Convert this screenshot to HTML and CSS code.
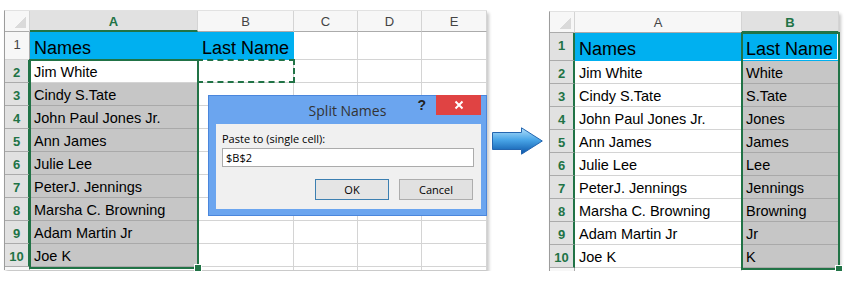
FILE: index.html
```html
<!DOCTYPE html>
<html lang="en">

<head>
  <meta charset="UTF-8">
  <title>Split Names</title>
  <link rel="stylesheet" href="styles.css">
</head>

<body>
  <div class="scene">
    <!-- Before: sheet with dialog -->
    <div class="sheet sheet-left">
      <div class="c hd corner"></div>
      <div class="c hd on">A</div>
      <div class="c hd">B</div>
      <div class="c hd">C</div>
      <div class="c hd">D</div>
      <div class="c hd">E</div>

      <div class="c rh">1</div>
      <div class="c cyan">Names</div>
      <div class="c cyan">Last Name</div>
      <div class="c"></div>
      <div class="c"></div>
      <div class="c"></div>

      <div class="c rh on">2</div>
      <div class="c">Jim White</div>
      <div class="c"></div>
      <div class="c"></div>
      <div class="c"></div>
      <div class="c"></div>

      <div class="c rh on">3</div>
      <div class="c gray">Cindy S.Tate</div>
      <div class="c"></div>
      <div class="c"></div>
      <div class="c"></div>
      <div class="c"></div>

      <div class="c rh on">4</div>
      <div class="c gray">John Paul Jones Jr.</div>
      <div class="c"></div>
      <div class="c"></div>
      <div class="c"></div>
      <div class="c"></div>

      <div class="c rh on">5</div>
      <div class="c gray">Ann James</div>
      <div class="c"></div>
      <div class="c"></div>
      <div class="c"></div>
      <div class="c"></div>

      <div class="c rh on">6</div>
      <div class="c gray">Julie Lee</div>
      <div class="c"></div>
      <div class="c"></div>
      <div class="c"></div>
      <div class="c"></div>

      <div class="c rh on">7</div>
      <div class="c gray">PeterJ. Jennings</div>
      <div class="c"></div>
      <div class="c"></div>
      <div class="c"></div>
      <div class="c"></div>

      <div class="c rh on">8</div>
      <div class="c gray">Marsha C. Browning</div>
      <div class="c"></div>
      <div class="c"></div>
      <div class="c"></div>
      <div class="c"></div>

      <div class="c rh on">9</div>
      <div class="c gray">Adam Martin Jr</div>
      <div class="c"></div>
      <div class="c"></div>
      <div class="c"></div>
      <div class="c"></div>

      <div class="c rh on">10</div>
      <div class="c gray">Joe K</div>
      <div class="c"></div>
      <div class="c"></div>
      <div class="c"></div>
      <div class="c"></div>

      <div class="c rh tail"></div>
      <div class="c tail"></div>
      <div class="c tail"></div>
      <div class="c tail"></div>
      <div class="c tail"></div>
      <div class="c tail"></div>

      <div class="range range-a"><span class="handle"></span></div>
      <div class="ants"></div>

      <div class="dialog">
        <div class="titlebar">
          <span class="title">Split Names</span>
          <div class="controls">
            <span class="help">?</span>
            <span class="close">
              <svg width="10" height="10" viewBox="0 0 10 10">
                <path d="M1.5 1.5 L8.5 8.5 M8.5 1.5 L1.5 8.5" stroke="#fff" stroke-width="2" />
              </svg>
            </span>
          </div>
        </div>
        <div class="panel">
          <div class="label">Paste to (single cell):</div>
          <div class="input">$B$2</div>
          <div class="buttons">
            <div class="btn default">OK</div>
            <div class="btn">Cancel</div>
          </div>
        </div>
      </div>
    </div>

    <!-- Arrow -->
    <svg class="arrow" width="51" height="28" viewBox="0 0 51 28">
      <defs>
        <linearGradient id="arrowFill" x1="0" y1="0" x2="0" y2="1">
          <stop offset="0" stop-color="#b4e0fa" />
          <stop offset="0.45" stop-color="#4aa6e8" />
          <stop offset="1" stop-color="#0b55a8" />
        </linearGradient>
      </defs>
      <path d="M0.5 5.5 H29.5 V0.8 L50.3 14 L29.5 27.2 V22.5 H0.5 Z" fill="url(#arrowFill)" stroke="#2466b0" stroke-width="1" />
    </svg>

    <!-- After: split result -->
    <div class="sheet sheet-right">
      <div class="c hd corner"></div>
      <div class="c hd">A</div>
      <div class="c hd on">B</div>

      <div class="c rh on">1</div>
      <div class="c cyan">Names</div>
      <div class="c cyan active">Last Name</div>

      <div class="c rh on">2</div>
      <div class="c">Jim White</div>
      <div class="c gray">White</div>

      <div class="c rh on">3</div>
      <div class="c">Cindy S.Tate</div>
      <div class="c gray">S.Tate</div>

      <div class="c rh on">4</div>
      <div class="c">John Paul Jones Jr.</div>
      <div class="c gray">Jones</div>

      <div class="c rh on">5</div>
      <div class="c">Ann James</div>
      <div class="c gray">James</div>

      <div class="c rh on">6</div>
      <div class="c">Julie Lee</div>
      <div class="c gray">Lee</div>

      <div class="c rh on">7</div>
      <div class="c">PeterJ. Jennings</div>
      <div class="c gray">Jennings</div>

      <div class="c rh on">8</div>
      <div class="c">Marsha C. Browning</div>
      <div class="c gray">Browning</div>

      <div class="c rh on">9</div>
      <div class="c">Adam Martin Jr</div>
      <div class="c gray">Jr</div>

      <div class="c rh on">10</div>
      <div class="c">Joe K</div>
      <div class="c gray">K</div>

      <div class="c rh tail"></div>
      <div class="c tail"></div>
      <div class="c tail"></div>

      <div class="range range-b"><span class="handle"></span></div>
    </div>
  </div>
</body>

</html>
```

FILE: styles.css
```css
body {
  margin: 0;
  background: #fff;
  font-family: "Liberation Sans", Arial, sans-serif;
}

.scene {
  display: flex;
  align-items: flex-start;
}

/* Sheets */
.sheet {
  display: grid;
  position: relative;
  flex: none;
  background: #fff;
  border-left: 1px solid #9c9c9c;
  border-top: 1px solid #e2e2e2;
  box-shadow: 2px 3px 3px rgba(0, 0, 0, 0.22);
}

.sheet-left {
  margin: 10px 0 0 4px;
  grid-template-columns: 25px 168px 96px 64px 64px 65px;
  grid-template-rows: 21px 28px repeat(9, 23px) 3px;
}

.sheet-right {
  margin: 11px 0 0 6px;
  grid-template-columns: 25px 167px 97px;
  grid-template-rows: 21px 28px repeat(9, 23px) 3px;
}

.c {
  box-sizing: border-box;
  border-right: 1px solid #d4d4d4;
  border-bottom: 1px solid #d4d4d4;
  padding: 1px 0 0 4px;
  font-size: 14.5px;
  line-height: 22px;
  white-space: nowrap;
  color: #000;
}

.hd {
  background: #f7f7f7;
  border-bottom-color: #ababab;
  padding: 0;
  text-align: center;
  font-size: 13px;
  line-height: 21px;
  color: #444;
}

.hd.on {
  background: #e1e1e1;
  color: #217346;
  font-weight: bold;
  border-bottom: 2px solid #217346;
}

.corner {
  background: #f7f7f7 linear-gradient(to top left, #dadada 50%, transparent 50%) no-repeat right 3px bottom 3px / 12px 12px;
}

.rh {
  background: #f7f7f7;
  border-right-color: #ababab;
  padding: 2px 0 0;
  text-align: center;
  font-size: 13px;
  line-height: 21px;
  color: #444;
}

.rh.on {
  background: #e1e1e1;
  color: #217346;
  font-weight: bold;
  border-right: 2px solid #217346;
  border-bottom-color: #ababab;
}

.cyan {
  background: #00b0f0;
  border-color: #00b0f0;
  padding-top: 3px;
  font-size: 18px;
  line-height: 26px;
}

.active {
  box-shadow: inset 0 0 0 1px #fff;
}

.gray {
  background: #c6c6c6;
  border-color: #a9a9a9;
}

.tail {
  padding: 0;
  border-bottom: none;
}

/* Selection marks */
.range {
  position: absolute;
  inset: -1px -1px -2px -1px;
  border: 2px solid #217346;
}

.range-a {
  grid-column: 2 / 3;
  grid-row: 3 / 12;
}

.range-b {
  grid-column: 3 / 4;
  grid-row: 2 / 12;
}

.handle {
  position: absolute;
  right: -5px;
  bottom: -5px;
  width: 6px;
  height: 6px;
  background: #217346;
  border: 1px solid #fff;
}

.ants {
  position: absolute;
  grid-column: 3 / 4;
  grid-row: 3 / 4;
  inset: -1px -1px 0 -1px;
  border: 2px dashed #217346;
}

/* Dialog */
.dialog {
  position: absolute;
  left: 203px;
  top: 84px;
  width: 279px;
  height: 121px;
  box-sizing: border-box;
  display: flex;
  flex-direction: column;
  background: #6ba5ef;
  border: 1px solid #4a86dc;
  font-family: "Open Sans", sans-serif;
}

.titlebar {
  display: grid;
  height: 28px;
}

.title {
  grid-area: 1 / 1;
  justify-self: center;
  align-self: center;
  font-size: 14px;
  color: #333;
}

.controls {
  grid-area: 1 / 1;
  justify-self: end;
  align-self: start;
  display: flex;
  align-items: center;
  margin: -1px 5px 0 0;
}

.help {
  margin-right: 10px;
  font-family: "Liberation Sans", Arial, sans-serif;
  font-size: 14px;
  font-weight: bold;
  color: #222;
}

.close {
  display: flex;
  align-items: center;
  justify-content: center;
  width: 45px;
  height: 20px;
  background: #e04343;
}

.panel {
  flex: 1;
  margin: 0 5px 6px 7px;
  padding: 8px 7px 0 6px;
  background: #f0f0f0;
}

.label {
  font-size: 11px;
  line-height: 14px;
  color: #000;
}

.input {
  margin-top: 2px;
  height: 19px;
  box-sizing: border-box;
  padding-left: 3px;
  border: 1px solid #ababab;
  background: #fff;
  font-size: 11px;
  line-height: 17px;
}

.buttons {
  display: flex;
  justify-content: flex-end;
  gap: 10px;
  margin: 12px 1px 0 0;
}

.btn {
  width: 74px;
  height: 21px;
  box-sizing: border-box;
  border: 1px solid #adadad;
  background: #e1e1e1;
  text-align: center;
  font-size: 11px;
  line-height: 19px;
}

.btn.default {
  border-color: #3c7fb1;
  background: #e5e5e5;
}

.arrow {
  flex: none;
  margin: 127px 0 0 5px;
}
```
